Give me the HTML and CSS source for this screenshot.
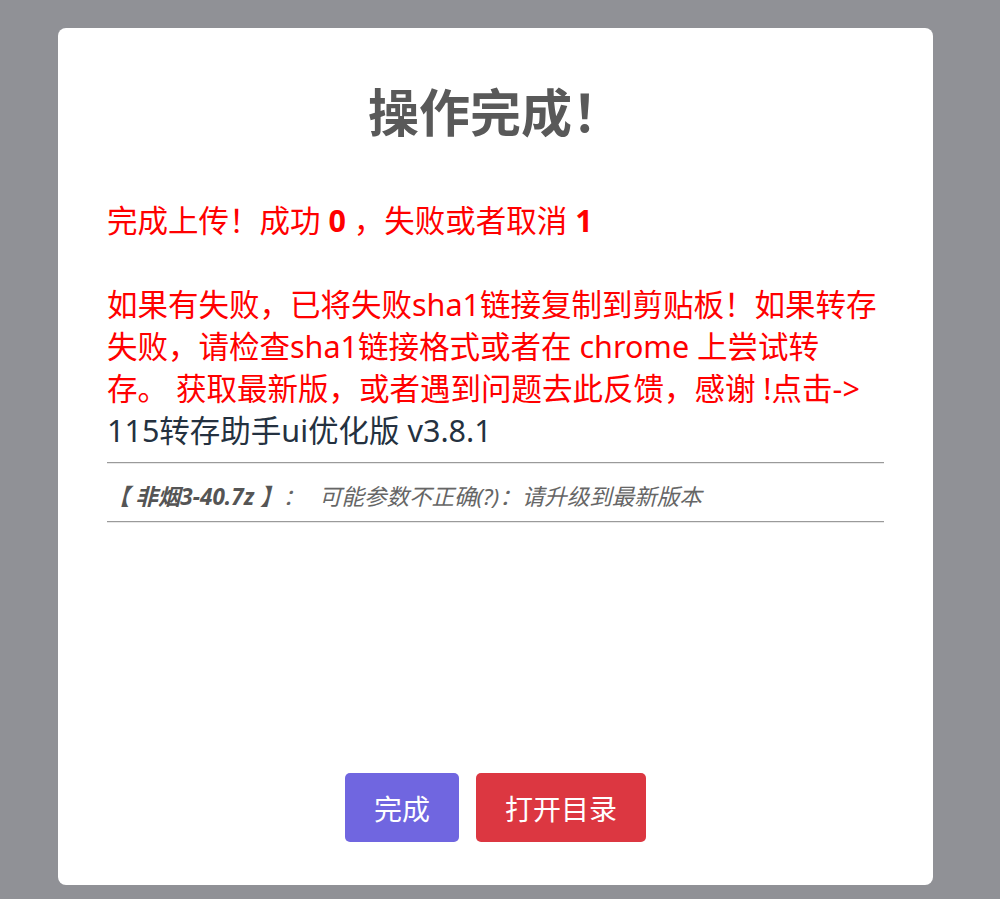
FILE: index.html
```html
<!DOCTYPE html>
<html lang="zh-CN">
<head>
<meta charset="utf-8">
<title>操作完成！</title>
<link rel="stylesheet" href="styles.css">
</head>
<body>
<div class="backdrop">
  <div class="popup">
    <h2 class="title">操作完成！</h2>
    <div class="content">
      <span class="line">完成上传！成功 <b>0</b> ，失败或者取消 <b>1</b></span><br>
      <br>
      <span class="line">如果有失败，已将失败sha1链接复制到剪贴板！如果转存</span><br>
      <span class="line">失败，请检查sha1链接格式或者在 chrome 上尝试转</span><br>
      <span class="line">存。 获取最新版，或者遇到问题去此反馈，感谢 !点击-&gt;</span><br>
      <a class="link" href="#">115转存助手ui优化版 v3.8.1</a>
    </div>
    <hr class="rule">
    <p class="detail"><b>【 非烟3-40.7z 】</b>：<span class="msg">可能参数不正确(?)：请升级到最新版本</span></p>
    <hr class="rule">
    <div class="actions">
      <button class="btn btn-confirm">完成</button>
      <button class="btn btn-deny">打开目录</button>
    </div>
  </div>
</div>
</body>
</html>
```

FILE: styles.css
```css
html, body {
  margin: 0;
  padding: 0;
  height: 100%;
}

body {
  background: #909196;
  font-family: "Noto Sans", "Noto Sans CJK SC", sans-serif;
  overflow: hidden;
}

.backdrop {
  padding: 28px 0 0 58px;
}

.popup {
  box-sizing: border-box;
  width: 875px;
  height: 857px;
  background: #ffffff;
  border-radius: 8px;
  padding: 55px 49px 43px 49px;
  display: flex;
  flex-direction: column;
}

.title {
  margin: 0;
  text-align: center;
  font-size: 51px;
  line-height: 58px;
  font-weight: 700;
  color: #595959;
}

.content {
  margin-top: 58px;
  font-size: 30.5px;
  line-height: 42px;
  color: #ff0000;
}

.line {
  white-space: nowrap;
}

.content b {
  font-weight: 700;
}

.link {
  color: #243140;
  text-decoration: none;
  white-space: nowrap;
}

.rule {
  margin: 11px 0 0;
  height: 0;
  border: 0;
  border-top: 1px solid #9a9a9a;
  border-bottom: 1px solid #e8e8e8;
}

.detail {
  margin: 0;
  height: 57px;
  display: flex;
  align-items: center;
  font-size: 22.5px;
  font-style: italic;
  color: #666666;
  white-space: nowrap;
  padding-top: 5px;
  box-sizing: border-box;
}

.detail b {
  font-weight: 700;
  color: #555555;
}

.msg {
  margin-left: 14px;
}

.detail + .rule {
  margin-top: 0;
}

.actions {
  margin-top: auto;
  display: flex;
  justify-content: center;
  gap: 17px;
}

.btn {
  height: 69px;
  border: 0;
  border-radius: 5px;
  color: #ffffff;
  font-family: "Noto Sans", "Noto Sans CJK SC", sans-serif;
  font-size: 28px;
  padding: 0 29px;
  cursor: pointer;
}

.btn-confirm {
  background: #7066e0;
}

.btn-deny {
  background: #dc3741;
}
```
